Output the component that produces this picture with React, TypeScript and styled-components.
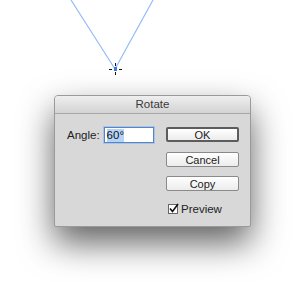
import React from 'react';
import styled, { createGlobalStyle } from 'styled-components';

const GlobalStyle = createGlobalStyle`
  html, body {
    margin: 0;
    padding: 0;
    background: #ffffff;
    font-family: "Liberation Sans", Arial, sans-serif;
  }
`;

const Page = styled.div`
  width: 300px;
  height: 282px;
  overflow: hidden;
  background: #ffffff;
`;

const Artboard = styled.div`
  height: 95px;
`;

const Dialog = styled.div`
  margin-left: 54px;
  width: 197px;
  height: 132px;
  box-sizing: border-box;
  border: 1px solid #9a9a9a;
  border-radius: 4px 4px 2px 2px;
  background: #d8d8d8;
  box-shadow: 0 16px 34px rgba(0, 0, 0, 0.62);
  display: flex;
  flex-direction: column;
  overflow: hidden;
`;

const TitleBar = styled.div`
  height: 17px;
  line-height: 17px;
  text-align: center;
  font-size: 11.5px;
  color: #3a3a3a;
  background: linear-gradient(#efefef, #d3d3d3);
  border-bottom: 1px solid #a8a8a8;
`;

const Body = styled.div`
  flex: 1;
  display: flex;
  justify-content: space-between;
  padding: 13px 11px 0 12px;
`;

const FieldRow = styled.div`
  display: flex;
  align-items: center;
  gap: 4px;
  height: 16px;
  font-size: 11.5px;
  color: #222;
`;

const AngleInput = styled.div`
  width: 46px;
  height: 14px;
  border: 1px solid #5a84c0;
  box-shadow: 0 0 0 1px #a8c4ea;
  background: #ffffff;
  display: flex;
  align-items: center;
  padding-left: 2px;
  box-sizing: content-box;
`;

const Selected = styled.span`
  background: #b5d3f7;
  color: #111;
  font-size: 11.5px;
  line-height: 13px;
`;

const ButtonColumn = styled.div`
  display: flex;
  flex-direction: column;
  width: 73px;
`;

const Button = styled.div<{ $primary?: boolean; $gap: number }>`
  height: 15px;
  margin-top: ${(p) => p.$gap}px;
  box-sizing: border-box;
  border: ${(p) => (p.$primary ? '2px solid #5c5c5c' : '1px solid #8a8a8a')};
  border-radius: 2px;
  background: linear-gradient(#ffffff, #ececec);
  font-size: 11px;
  color: #222;
  display: flex;
  align-items: center;
  justify-content: center;
`;

const CheckRow = styled.div`
  margin-top: 11px;
  height: 13px;
  display: flex;
  align-items: center;
  gap: 3px;
  padding-left: 2px;
  font-size: 11.5px;
  color: #222;
`;

const Box = styled.div`
  width: 8px;
  height: 8px;
  border: 1px solid #666;
  background: #fff;
  position: relative;
`;

const Guides = () => (
  <svg width="300" height="95" viewBox="0 0 300 95">
    <line x1="71" y1="0" x2="115" y2="69" stroke="#8db8f5" strokeWidth="1.1" />
    <line x1="153" y1="0" x2="115" y2="69" stroke="#8db8f5" strokeWidth="1.1" />
    <rect x="114" y="67" width="3" height="4" fill="#3e7ad6" />
    <g stroke="#111" strokeWidth="1">
      <line x1="115.5" y1="63" x2="115.5" y2="66" />
      <line x1="115.5" y1="72" x2="115.5" y2="75" />
      <line x1="109" y1="69.5" x2="112" y2="69.5" />
      <line x1="119" y1="69.5" x2="122" y2="69.5" />
    </g>
  </svg>
);

const Check = () => (
  <svg width="11" height="11" viewBox="0 0 11 11" style={{ position: 'absolute', left: -1, top: -2 }}>
    <path d="M2 5.5 L4.5 8.5 L10 1" fill="none" stroke="#111" strokeWidth="1.6" />
  </svg>
);

export default function App() {
  return (
    <Page>
      <GlobalStyle />
      <Artboard>
        <Guides />
      </Artboard>
      <Dialog>
        <TitleBar>Rotate</TitleBar>
        <Body>
          <FieldRow>
            Angle:
            <AngleInput>
              <Selected>60°</Selected>
            </AngleInput>
          </FieldRow>
          <ButtonColumn>
            <Button $primary $gap={0}>OK</Button>
            <Button $gap={10}>Cancel</Button>
            <Button $gap={9}>Copy</Button>
            <CheckRow>
              <Box>
                <Check />
              </Box>
              Preview
            </CheckRow>
          </ButtonColumn>
        </Body>
      </Dialog>
    </Page>
  );
}
